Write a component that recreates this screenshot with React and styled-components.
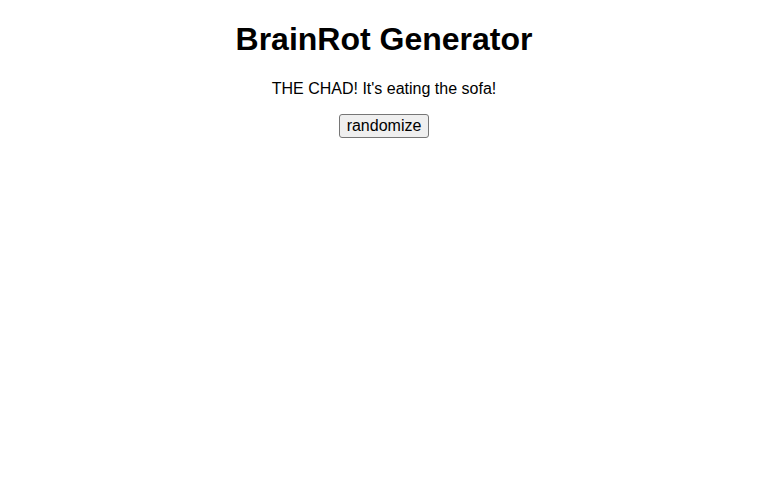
import React, { useState } from "react";
import styled, { createGlobalStyle } from "styled-components";

const GlobalStyle = createGlobalStyle`
  html, body {
    margin: 0;
    background: #ffffff;
  }
  body {
    font-family: "Liberation Sans", Arial, sans-serif;
    color: #000000;
  }
`;

const Page = styled.main`
  text-align: center;
`;

const Title = styled.h1`
  font-size: 32px;
  font-weight: bold;
  margin: 21.44px 0;
`;

const Phrase = styled.p`
  font-size: 16px;
  margin: 16px 0;
`;

const RandomButton = styled.button`
  font-family: "Liberation Sans", Arial, sans-serif;
  font-size: 16px;
  line-height: normal;
  color: #000000;
  background: #efefef;
  border: 1px solid #767676;
  border-radius: 3px;
  padding: 2px 7px 2px;
  cursor: pointer;

  &:hover {
    background: #e5e5e5;
  }
`;

const subjects = ["THE CHAD!", "SKIBIDI TOILET!", "THE SIGMA!", "GRIMACE!", "OHIO RIZZLER!"];
const actions = ["It's eating the sofa!", "It's mewing at the moon!", "It's gyatt-walking!", "It's fanum-taxing the fridge!"];

export default function App() {
  const [phrase, setPhrase] = useState("THE CHAD! It's eating the sofa!");

  const randomize = () => {
    const s = subjects[Math.floor(Math.random() * subjects.length)];
    const a = actions[Math.floor(Math.random() * actions.length)];
    setPhrase(`${s} ${a}`);
  };

  return (
    <Page>
      <GlobalStyle />
      <Title>BrainRot Generator</Title>
      <Phrase>{phrase}</Phrase>
      <RandomButton onClick={randomize}>randomize</RandomButton>
    </Page>
  );
}
